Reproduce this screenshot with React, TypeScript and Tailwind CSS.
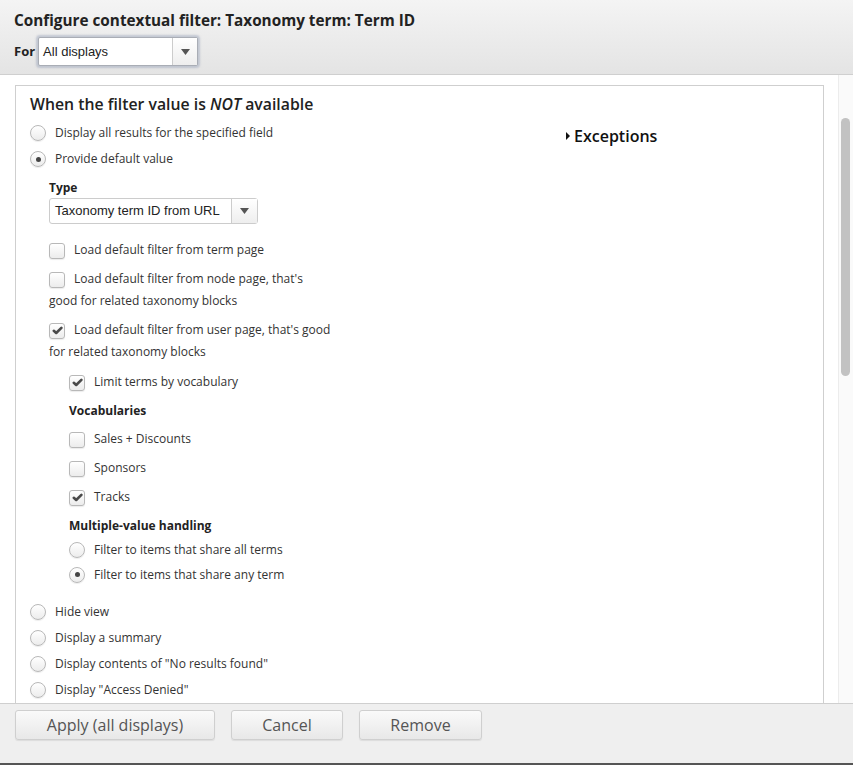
import React from 'react';

const font = { fontFamily: '"Open Sans", "Liberation Sans", sans-serif' };

const Radio: React.FC<{ checked?: boolean }> = ({ checked }) => (
  <span className="inline-flex h-[16px] w-[16px] shrink-0 items-center justify-center rounded-full border border-[#b8b8b8] bg-gradient-to-b from-white to-[#ececec] shadow-[0_1px_1px_rgba(0,0,0,0.08)]">
    {checked && <span className="h-[5px] w-[5px] rounded-full bg-[#444]" />}
  </span>
);

const Check: React.FC<{ checked?: boolean }> = ({ checked }) => (
  <span className="inline-flex h-[16px] w-[16px] shrink-0 items-center justify-center rounded-[3px] border border-[#b8b8b8] bg-gradient-to-b from-white to-[#ececec] align-middle shadow-[0_1px_1px_rgba(0,0,0,0.08)]">
    {checked && (
      <svg width="11" height="9" viewBox="0 0 11 9">
        <path d="M1.8 4.8 L4.2 7 L9.4 1.8" fill="none" stroke="#4a4a4a" strokeWidth="2.6" strokeLinecap="round" strokeLinejoin="round" />
      </svg>
    )}
  </span>
);

const RadioRow: React.FC<{ label: string; checked?: boolean; h?: string }> = ({ label, checked, h = 'h-[26px]' }) => (
  <div className={`flex ${h} items-center gap-[9px]`}>
    <Radio checked={checked} />
    <span>{label}</span>
  </div>
);

const CheckRow: React.FC<{ label: string; checked?: boolean }> = ({ label, checked }) => (
  <div className="w-[283px] py-[3px] leading-[22px]">
    <Check checked={checked} />
    <span className="ml-[9px]">{label}</span>
  </div>
);

const Arrow = () => (
  <svg width="9" height="6" viewBox="0 0 9 6">
    <path d="M0 0 H9 L4.5 6 Z" fill="#555" />
  </svg>
);

export default function App() {
  return (
    <div className="flex h-[765px] w-[853px] flex-col overflow-hidden bg-white text-[#333]" style={font}>
      {/* header */}
      <div className="h-[75px] shrink-0 border-b border-[#cfcfcf] bg-gradient-to-b from-[#f4f4f4] to-[#e4e4e4] px-[14px] pt-[9px]">
        <h1 className="text-[15.3px] font-bold leading-[22px] text-[#222]">Configure contextual filter: Taxonomy term: Term ID</h1>
        <div className="mt-[6px] flex items-center gap-[3px]">
          <span className="text-[13px] font-bold text-[#222]">For</span>
          <div className="flex h-[29px] w-[160px] items-stretch rounded-[2px] border border-[#a9adb5] bg-white shadow-[0_0_2px_2px_rgba(160,170,190,0.55)]">
            <span className="flex-1 pl-[4px] text-[13px] leading-[27px] text-[#222]" style={{ fontFamily: '"Liberation Sans", Arial, sans-serif' }}>
              All displays
            </span>
            <span className="flex w-[25px] items-center justify-center border-l border-[#ccc] bg-gradient-to-b from-white to-[#eee]">
              <Arrow />
            </span>
          </div>
        </div>
      </div>

      {/* scrolling body */}
      <div className="flex min-h-0 flex-1">
        <div className="min-w-0 flex-1 overflow-hidden pl-[15px] pr-[14px] pt-[10px]">
          <div className="flex border border-b-0 border-[#cfcfcf] pb-[40px] text-[12px]">
            <div className="w-[520px] pl-[14px] pt-[6px]">
              <div className="text-[15.8px] font-semibold leading-[24px] text-[#222]">
                When the filter value is <em className="italic">NOT</em> available
              </div>
              <div className="mt-[4px]">
                <RadioRow label="Display all results for the specified field" />
                <RadioRow label="Provide default value" checked />
              </div>

              <div className="pl-[19px]">
                <div className="mt-[7px] font-bold leading-[18px] text-[#222]">Type</div>
                <div className="mt-[1px] flex h-[26px] w-[209px] items-stretch rounded-[3px] border border-[#ccc] bg-white">
                  <span className="flex-1 pl-[5px] text-[13px] leading-[24px] text-[#222]" style={{ fontFamily: '"Liberation Sans", Arial, sans-serif' }}>
                    Taxonomy term ID from URL
                  </span>
                  <span className="flex w-[26px] items-center justify-center border-l border-[#ccc] bg-gradient-to-b from-white to-[#eee]">
                    <Arrow />
                  </span>
                </div>

                <div className="mt-[12px] flex flex-col gap-[1px]">
                  <CheckRow label="Load default filter from term page" />
                  <CheckRow label="Load default filter from node page, that's good for related taxonomy blocks" />
                  <CheckRow label="Load default filter from user page, that's good for related taxonomy blocks" checked />
                </div>

                <div className="mt-[2px] pl-[20px]">
                  <CheckRow label="Limit terms by vocabulary" checked />
                  <div className="mt-[4px] font-bold leading-[22px] text-[#222]">Vocabularies</div>
                  <div className="mt-[3px] flex flex-col gap-[1px]">
                    <CheckRow label="Sales + Discounts" />
                    <CheckRow label="Sponsors" />
                    <CheckRow label="Tracks" checked />
                  </div>
                  <div className="mt-[4px] font-bold leading-[22px] text-[#222]">Multiple-value handling</div>
                  <div>
                    <RadioRow label="Filter to items that share all terms" h="h-[25px]" />
                    <RadioRow label="Filter to items that share any term" h="h-[25px]" checked />
                  </div>
                </div>
              </div>

              <div className="mt-[12px]">
                <RadioRow label="Hide view" />
                <RadioRow label="Display a summary" />
                <RadioRow label={'Display contents of "No results found"'} />
                <RadioRow label={'Display "Access Denied"'} />
              </div>
            </div>

            <div className="pl-[30px] pt-[38px]">
              <div className="flex items-center gap-[4px] text-[16px] font-semibold text-[#111]">
                <svg width="4" height="8" viewBox="0 0 4 8">
                  <path d="M0 0 L4 4 L0 8 Z" fill="#111" />
                </svg>
                Exceptions
              </div>
            </div>
          </div>
        </div>

        {/* scrollbar */}
        <div className="w-[15px] shrink-0 border-l border-[#ececec] bg-[#fafafa] pl-[2px] pt-[43px]">
          <div className="h-[258px] w-[9px] rounded-full bg-[#c2c2c2]" />
        </div>
      </div>

      {/* footer */}
      <div className="flex h-[62px] shrink-0 items-start gap-[16px] border-t border-b-2 border-t-[#cfcfcf] border-b-[#555] bg-[#efefef] px-[15px] pt-[6px]">
        {['Apply (all displays)', 'Cancel', 'Remove'].map((t, i) => (
          <button
            key={t}
            className={`h-[30px] rounded-[3px] border border-[#cfcfcf] bg-gradient-to-b from-[#fafafa] to-[#e8e8e8] text-[16px] text-[#555] shadow-[0_1px_1px_rgba(0,0,0,0.08)] ${
              i === 0 ? 'w-[200px]' : i === 1 ? 'w-[112px]' : 'w-[123px]'
            }`}
          >
            {t}
          </button>
        ))}
      </div>
    </div>
  );
}
